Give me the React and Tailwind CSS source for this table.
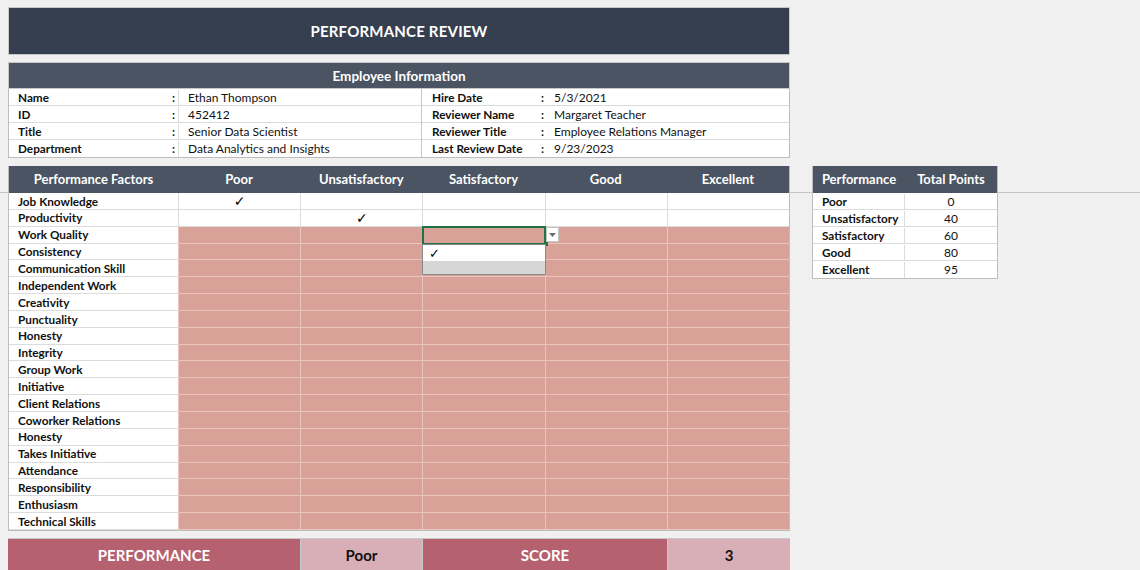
import React from "react";

const factors = [
  "Job Knowledge",
  "Productivity",
  "Work Quality",
  "Consistency",
  "Communication Skill",
  "Independent Work",
  "Creativity",
  "Punctuality",
  "Honesty",
  "Integrity",
  "Group Work",
  "Initiative",
  "Client Relations",
  "Coworker Relations",
  "Honesty",
  "Takes Initiative",
  "Attendance",
  "Responsibility",
  "Enthusiasm",
  "Technical Skills",
];

const levels = ["Poor", "Unsatisfactory", "Satisfactory", "Good", "Excellent"];
const points = [0, 40, 60, 80, 95];

const infoLeft = [
  ["Name", "Ethan Thompson"],
  ["ID", "452412"],
  ["Title", "Senior Data Scientist"],
  ["Department", "Data Analytics and Insights"],
];
const infoRight = [
  ["Hire Date", "5/3/2021"],
  ["Reviewer Name", "Margaret Teacher"],
  ["Reviewer Title", "Employee Relations Manager"],
  ["Last Review Date", "9/23/2023"],
];

const checks = { 0: 0, 1: 1 };

const Check = ({ size = "text-[14px]" }) => (
  <span className={`${size} font-bold leading-none text-black`} style={{ fontFamily: "'DejaVu Sans', sans-serif" }}>
    ✓
  </span>
);

export default function App() {
  return (
    <div
      className="relative w-[1140px] h-[570px] overflow-hidden bg-[#f0f0f0] text-[#111]"
      style={{ fontFamily: "Lato, 'Open Sans', 'Liberation Sans', sans-serif" }}
    >
      <div className="absolute left-0 top-[192px] h-px w-full bg-[#c4c4c4]" />
      <div className="relative flex pl-[8px] pt-[7px]">
        {/* Left column */}
        <div className="w-[782px] flex flex-col">
          <div className="h-[48px] bg-[#353f4f] border border-[#c8c8c8] flex items-center justify-center text-white font-bold text-[15px] tracking-[0.2px]">
            PERFORMANCE REVIEW
          </div>
          <div className="mt-[7px] h-[27px] bg-[#4a5462] border border-[#c8c8c8] flex items-center justify-center text-white font-bold text-[13.5px] pt-px">
            Employee Information
          </div>
          <div className="flex bg-white border-x border-b border-[#bdbdbd]">
            <div className="w-[413px] flex flex-col border-r border-[#c8c8c8]">
              {infoLeft.map(([k, v], i) => (
                <div
                  key={k}
                  className={`h-[17px] flex items-center pt-px ${i < 3 ? "border-b border-[#dcdcdc]" : ""}`}
                >
                  <div className="w-[169px] pl-[9px] font-bold text-[11.75px] flex justify-between pr-[3px]">
                    <span>{k}</span>
                    <span>:</span>
                  </div>
                  <div className="h-full border-l border-[#dcdcdc] pl-[9px] flex items-center text-[12px]">{v}</div>
                </div>
              ))}
            </div>
            <div className="flex-1 flex flex-col">
              {infoRight.map(([k, v], i) => (
                <div
                  key={k}
                  className={`h-[17px] flex items-center pt-px ${i < 3 ? "border-b border-[#dcdcdc]" : ""}`}
                >
                  <div className="w-[122px] pl-[10px] font-bold text-[11.75px] flex justify-between">
                    <span>{k}</span>
                    <span>:</span>
                  </div>
                  <div className="pl-[10px] text-[12px]">{v}</div>
                </div>
              ))}
            </div>
          </div>

          {/* Factors table */}
          <div className="mt-[8px] flex flex-col border border-[#bdbdbd] border-t-0">
            <div className="h-[27px] bg-[#4a5462] flex text-white font-bold text-[13px] pt-px">
              <div className="w-[169px] flex items-center justify-center">Performance Factors</div>
              {levels.map((l) => (
                <div key={l} className="flex-1 flex items-center justify-center">
                  {l}
                </div>
              ))}
            </div>
            {factors.map((f, r) => {
              const pink = r >= 2;
              return (
                <div key={r} className="h-[16.85px] flex">
                  <div className="w-[169px] bg-white pl-[9px] pt-px font-bold text-[11.75px] flex items-center border-b border-[#dcdcdc]">
                    {f}
                  </div>
                  {levels.map((l, c) => (
                    <div
                      key={l}
                      className={
                        pink
                          ? "flex-1 bg-[#d9a299] border-l border-b border-[#ebc4be] flex items-center justify-center"
                          : "flex-1 bg-white border-l border-b border-[#dcdcdc] flex items-center justify-center"
                      }
                    >
                      {checks[r] === c ? <Check /> : null}
                    </div>
                  ))}
                </div>
              );
            })}
          </div>

          {/* Bottom bar */}
          <div className="mt-[7px] h-[34px] flex text-[15px] font-bold border-t border-[#c8c8c8]">
            <div className="w-[292px] bg-[#b5616f] text-white flex items-center justify-center">PERFORMANCE</div>
            <div className="w-[122px] bg-[#d8afb7] flex items-center justify-center border-l border-[#c8c8c8]">Poor</div>
            <div className="w-[245px] bg-[#b5616f] text-white flex items-center justify-center border-l border-[#c8c8c8]">SCORE</div>
            <div className="flex-1 bg-[#d8afb7] flex items-center justify-center border-l border-[#c8c8c8]">3</div>
          </div>
        </div>

        {/* Right table */}
        <div className="ml-[22px] mt-[159px] w-[186px] self-start flex flex-col border border-[#bdbdbd] border-t-0">
          <div className="h-[27px] bg-[#4a5462] flex text-white font-bold text-[13px] pt-px">
            <div className="w-[92px] flex items-center justify-center">Performance</div>
            <div className="flex-1 flex items-center justify-center">Total Points</div>
          </div>
          {levels.map((l, i) => (
            <div key={l} className={`h-[17px] flex bg-white pt-px ${i < 4 ? "border-b border-[#dcdcdc]" : ""}`}>
              <div className="w-[92px] pl-[9px] font-bold text-[11.75px] flex items-center border-r border-[#dcdcdc]">{l}</div>
              <div className="flex-1 flex items-center justify-center text-[12px]">{points[i]}</div>
            </div>
          ))}
        </div>
      </div>

      {/* Dropdown overlay on Satisfactory / Work Quality */}
      <div className="absolute left-[422px] top-[226px] w-[124px] h-[19px] border-2 border-[#217346]" />
      <div className="absolute left-[544px] top-[242px] w-[4px] h-[4px] bg-[#217346]" />
      <div className="absolute left-[546px] top-[227px] w-[13px] h-[15px] bg-white border border-[#c6c6c6] flex items-center justify-center">
        <svg width="7" height="4" viewBox="0 0 7 4">
          <path d="M0 0 L7 0 L3.5 4 Z" fill="#6b6b6b" />
        </svg>
      </div>
      <div className="absolute left-[422px] top-[244px] w-[124px] h-[31px] bg-white border border-[#8a8a8a] flex flex-col">
        <div className="h-[16px] flex items-center pl-[6px]">
          <Check size="text-[13px]" />
        </div>
        <div className="flex-1 bg-[#d6d6d6]" />
      </div>
    </div>
  );
}
